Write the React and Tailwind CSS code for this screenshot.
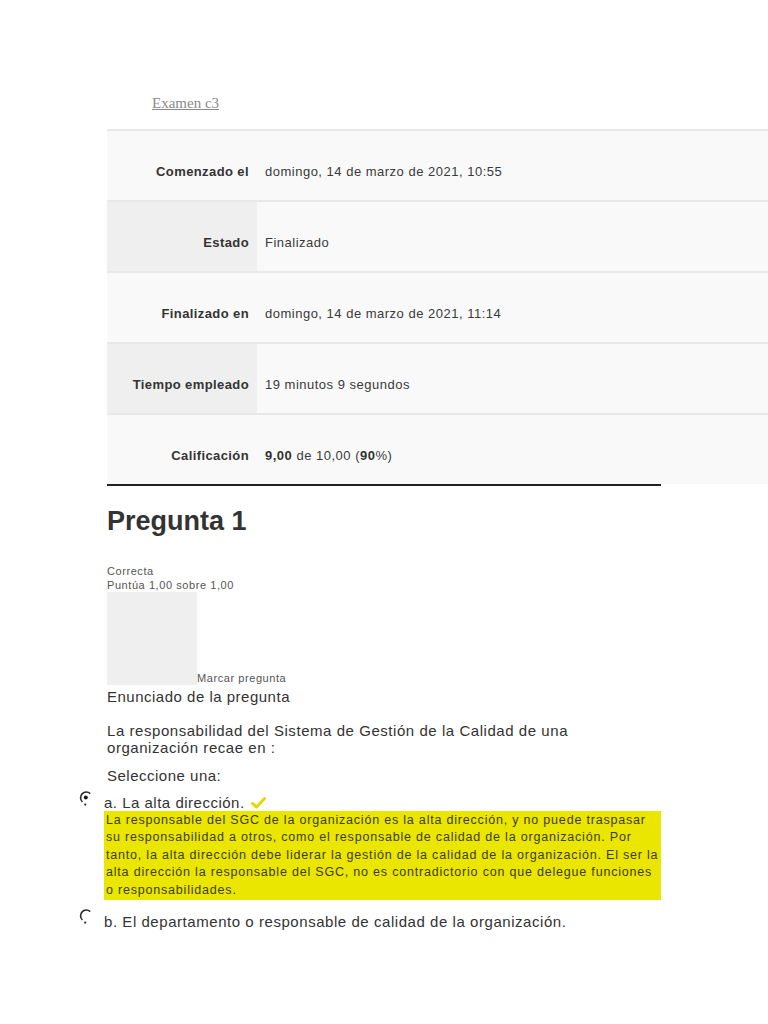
import React from "react";

const rows = [
  { label: "Comenzado el", value: "domingo, 14 de marzo de 2021, 10:55", shade: false },
  { label: "Estado", value: "Finalizado", shade: true },
  { label: "Finalizado en", value: "domingo, 14 de marzo de 2021, 11:14", shade: false },
  { label: "Tiempo empleado", value: "19 minutos 9 segundos", shade: true },
];

function Radio({ checked }) {
  return (
    <svg width="14" height="16" viewBox="0 0 14 16" className="shrink-0">
      <path d="M11.2 3.6 A5.6 5.6 0 1 0 3.4 12" fill="none" stroke="#2a2a2a" strokeWidth="1.6" />
      <circle cx="6.2" cy="14.6" r="1.1" fill="#2a2a2a" />
      {checked && <circle cx="6.8" cy="7.6" r="2" fill="#1a1a1a" />}
    </svg>
  );
}

function Check() {
  return (
    <svg width="15" height="12" viewBox="0 0 15 12" className="inline-block ml-[6px] -mt-[3px]">
      <path d="M1.5 6.5 L5.5 10 L13.5 1.5" fill="none" stroke="#e6d60a" strokeWidth="3" strokeLinecap="round" strokeLinejoin="round" />
    </svg>
  );
}

export default function App() {
  return (
    <div className="w-[768px] min-h-[1024px] bg-white text-[#333] overflow-hidden" style={{ fontFamily: '"Liberation Sans", Arial, sans-serif' }}>
      <div className="pt-[91px] pl-[152px] h-[129px]">
        <span className="text-[15px] leading-[19px] text-[#8a8a8a] underline" style={{ fontFamily: '"Liberation Serif", "Times New Roman", serif' }}>
          Examen c3
        </span>
      </div>

      <div className="ml-[107px]">
        {rows.map((r) => (
          <div key={r.label} className="flex h-[71px] border-t-2 border-[#e8e8e8] bg-[#f9f9f9]">
            <div className={`w-[150px] flex items-center justify-end pt-[13px] pr-[8px] text-[13px] font-bold tracking-[0.4px] ${r.shade ? "bg-[#efefef]" : ""}`}>
              {r.label}
            </div>
            <div className="flex items-center pt-[13px] pl-[8px] text-[13px] tracking-[0.5px] text-[#3a3a3a]">{r.value}</div>
          </div>
        ))}
        <div className="flex h-[71px] border-t-2 border-[#e8e8e8] bg-[#f9f9f9]">
          <div className="w-[150px] flex items-center justify-end pt-[13px] pr-[8px] text-[13px] font-bold tracking-[0.4px]">Calificación</div>
          <div className="flex items-center pt-[13px] pl-[8px] text-[13px] tracking-[0.5px] text-[#3a3a3a]">
            <span className="font-bold text-[#333]">9,00</span>&nbsp;de 10,00 (<span className="font-bold text-[#333]">90</span>%)
          </div>
        </div>
        <div className="w-[554px] h-[2px] bg-[#222]" />

        <h2 className="mt-[19px] text-[27px] leading-[32px] font-bold text-[#333]">Pregunta 1</h2>

        <div className="mt-[27px] text-[11px] leading-[14px] tracking-[0.57px] text-[#555]">
          <div>Correcta</div>
          <div>Puntúa 1,00 sobre 1,00</div>
        </div>
        <div className="flex items-end">
          <div className="w-[90px] h-[93px] bg-[#efefef]" />
          <span className="text-[11px] leading-[13px] tracking-[0.57px] text-[#555]">Marcar pregunta</span>
        </div>
        <div className="mt-[3px] text-[15px] leading-[18px] tracking-[0.5px] text-[#333]">Enunciado de la pregunta</div>
        <p className="mt-[16px] w-[554px] text-[15px] leading-[17px] tracking-[0.55px] text-[#333]">
          La responsabilidad del Sistema de Gestión de la Calidad de una organización recae en :
        </p>
        <div className="mt-[11px] text-[15px] leading-[18px] tracking-[0.5px] text-[#333]">Seleccione una:</div>
      </div>

      <div className="mt-[5px] ml-[79px] flex gap-[11px]">
        <Radio checked />
        <div className="w-[557px] mt-[4px]">
          <div className="text-[15px] leading-[17px] tracking-[0.5px] text-[#333]">
            a. La alta dirección.<Check />
          </div>
          <div className="bg-[#ebe600] px-[2px] py-[1px] text-[12.5px] leading-[17.4px] tracking-[0.8px] text-[#403c10]">
            La responsable del SGC de la organización es la alta dirección, y no puede traspasar su responsabilidad a otros, como el responsable de calidad de la organización. Por tanto, la alta dirección debe liderar la gestión de la calidad de la organización. El ser la alta dirección la responsable del SGC, no es contradictorio con que delegue funciones o responsabilidades.
          </div>
        </div>
      </div>

      <div className="mt-[8px] ml-[79px] flex gap-[11px]">
        <Radio />
        <div className="mt-[5px] text-[15px] leading-[18px] tracking-[0.55px] text-[#333]">
          b. El departamento o responsable de calidad de la organización.
        </div>
      </div>
    </div>
  );
}
